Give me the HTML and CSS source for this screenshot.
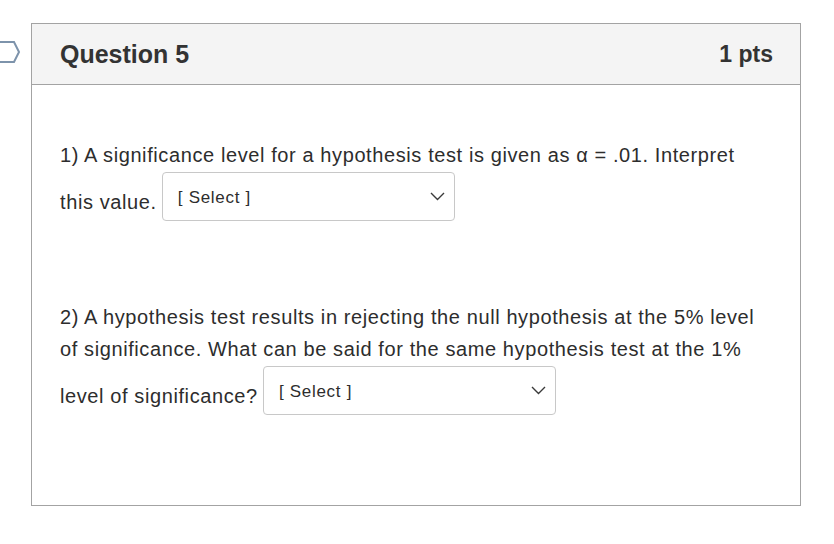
FILE: index.html
```html
<!DOCTYPE html>
<html>
<head>
<meta charset="utf-8">
<link rel="stylesheet" href="styles.css">
</head>
<body>
<div class="page">
  <svg class="marker" width="22" height="24" viewBox="0 0 22 24"><path d="M-2 2 H14 L19 12 L14 22 H-2" fill="none" stroke="#7d93ab" stroke-width="2"/></svg>
  <div class="card">
    <div class="card-header">
      <h2 class="q-title">Question 5</h2>
      <span class="q-pts">1 pts</span>
    </div>
    <div class="card-body">
      <p class="q-text">1) A significance level for a hypothesis test is given as α = .01. Interpret this value. <span class="select"><span class="select-label">[ Select ]</span><svg class="chev" width="15" height="9" viewBox="0 0 15 9"><path d="M1 1 L7.5 7.5 L14 1" fill="none" stroke="#3a3a3a" stroke-width="1.4"/></svg></span></p>
      <p class="q-text q-second">2) A hypothesis test results in rejecting the null hypothesis at the 5% level of significance. What can be said for the same hypothesis test at the 1% level of significance? <span class="select"><span class="select-label">[ Select ]</span><svg class="chev" width="15" height="9" viewBox="0 0 15 9"><path d="M1 1 L7.5 7.5 L14 1" fill="none" stroke="#3a3a3a" stroke-width="1.4"/></svg></span></p>
    </div>
  </div>
</div>
</body>
</html>
```

FILE: styles.css
```css
* { box-sizing: border-box; }
html, body { margin: 0; padding: 0; background: #fff; }
body {
  font-family: "Liberation Sans", Arial, sans-serif;
  color: #2d2d2d;
}
.page {
  position: relative;
  padding: 23px 0 0 31px;
  width: 834px;
  height: 544px;
}
.marker {
  position: absolute;
  left: 0;
  top: 40px;
}
.card {
  width: 770px;
  height: 483px;
  border: 1px solid #a3a3a3;
  display: flex;
  flex-direction: column;
}
.card-header {
  height: 61px;
  background: #f4f4f4;
  border-bottom: 1px solid #a3a3a3;
  display: flex;
  align-items: center;
  justify-content: space-between;
  padding: 0 27px 0 28px;
}
.q-title {
  margin: 0;
  font-size: 25px;
  font-weight: bold;
  color: #333;
}
.q-pts {
  font-size: 23px;
  font-weight: bold;
  color: #333;
}
.card-body {
  padding: 54px 28px 0 28px;
}
.q-text {
  margin: 0;
  font-size: 20px;
  letter-spacing: 0.6px;
  line-height: 32px;
  color: #2d2d2d;
}
.q-second {
  margin-top: 80px;
}
.select {
  display: inline-flex;
  align-items: center;
  justify-content: space-between;
  width: 293px;
  height: 49px;
  margin: 1px 0 0 -1px;
  border: 1px solid #c8c8c8;
  border-radius: 4px;
  padding: 0 9px 0 15px;
  vertical-align: 7px;
  background: #fff;
  letter-spacing: 0;
}
.select-label {
  font-size: 17px;
  letter-spacing: 0.7px;
  color: #2d2d2d;
  position: relative;
  top: 1px;
}
.chev {
  display: block;
}
```
